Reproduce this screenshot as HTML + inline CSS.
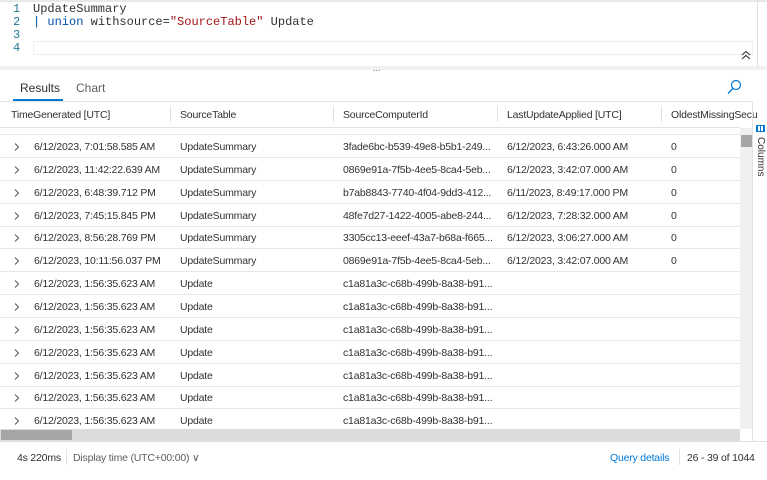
<!DOCTYPE html>
<html><head><style>
*{margin:0;padding:0;box-sizing:border-box}
body{width:767px;height:480px;overflow:hidden;background:#fff;font-family:"Liberation Sans",sans-serif;color:#323130;position:relative}
.a{position:absolute;white-space:nowrap}
.code{font-family:"Liberation Mono",monospace;font-size:12px;color:#323130}
.ln{color:#237893;font-family:"Liberation Mono",monospace;font-size:12px}
.t{font-size:10.5px;position:absolute;white-space:nowrap;letter-spacing:-0.2px}
.row{position:absolute;left:0;width:740px;height:23px;border-bottom:1px solid #e6e6e6}
</style></head><body>
<div class="a" style="left:0;top:0;width:767px;height:2px;background:#e8e8e8"></div>
<div class="a ln" style="left:13px;top:2px">1</div>
<div class="a ln" style="left:13px;top:15px">2</div>
<div class="a ln" style="left:13px;top:28px">3</div>
<div class="a ln" style="left:13px;top:41px">4</div>
<div class="a code" style="left:33px;top:2px">UpdateSummary</div>
<div class="a code" style="left:33px;top:15px"><span style="color:#0451a5">| union</span> withsource=<span style="color:#a31515">"SourceTable"</span> Update</div>
<div class="a" style="left:33px;top:41px;width:720px;height:14px;border:1px solid #eee"></div>
<div class="a" style="left:757px;top:0;width:1px;height:68px;background:#e0e0e0"></div>
<svg class="a" style="left:740px;top:50px" width="12" height="10"><path d="M2 5L6 1.5L10 5M2 9L6 5.5L10 9" fill="none" stroke="#333" stroke-width="1.1"/></svg>
<div class="a" style="left:0;top:66px;width:767px;height:4px;background:#f0f0f0"></div>
<div class="a" style="left:373px;top:63px;font-size:9px;color:#666">...</div>
<div class="a" style="left:20px;top:81px;font-size:12px;color:#323130">Results</div>
<div class="a" style="left:76px;top:81px;font-size:12px;color:#605e5c">Chart</div>
<div class="a" style="left:13px;top:99px;width:50px;height:2px;background:#0078d4"></div>
<svg class="a" style="left:726px;top:79px" width="16" height="16"><circle cx="10" cy="6" r="4.5" fill="none" stroke="#0078d4" stroke-width="1.2"/><line x1="7" y1="9.5" x2="2" y2="14.5" stroke="#0078d4" stroke-width="1.3"/></svg>
<div class="a" style="left:0;top:101px;width:752px;height:1px;background:#e1e1e1"></div>
<div class="a" style="left:0;top:127px;width:740px;height:1px;background:#e1e1e1"></div>
<div class="t" style="left:11px;top:109px">TimeGenerated [UTC]</div>
<div class="t" style="left:180px;top:109px">SourceTable</div>
<div class="t" style="left:343px;top:109px">SourceComputerId</div>
<div class="t" style="left:507px;top:109px">LastUpdateApplied [UTC]</div>
<div class="t" style="left:671px;top:109px">OldestMissingSecu</div>
<div class="a" style="left:170px;top:106px;width:1px;height:16px;background:#e1e1e1"></div>
<div class="a" style="left:333px;top:106px;width:1px;height:16px;background:#e1e1e1"></div>
<div class="a" style="left:497px;top:106px;width:1px;height:16px;background:#e1e1e1"></div>
<div class="a" style="left:661px;top:106px;width:1px;height:16px;background:#e1e1e1"></div>
<div class="a" style="left:0;top:134px;width:740px;height:1px;background:#e6e6e6"></div>
<div id="rows"></div>
<div class="a" style="left:740px;top:128px;width:13px;height:301px;background:#f0f0f0"></div>
<div class="a" style="left:741px;top:135px;width:11px;height:12px;background:#a6a6a6"></div>
<div class="a" style="left:0;top:429px;width:740px;height:12px;background:#dcdcdc"></div>
<div class="a" style="left:1px;top:430px;width:71px;height:10px;background:#a6a6a6"></div>
<div class="a" style="left:752px;top:101px;width:1px;height:340px;background:#e1e1e1"></div>
<div class="a" style="left:0;top:441px;width:767px;height:1px;background:#e1e1e1"></div>
<div class="a" style="left:756px;top:125px;width:9px;height:7px;border:1px solid #0078d4;background:repeating-linear-gradient(90deg,#0078d4 0 1px,transparent 1px 3px)"></div>
<div class="a" style="top:137px;font-size:10px;transform:rotate(90deg);transform-origin:0 0;left:766px">Columns</div>
<div class="t" style="left:17px;top:452px">4s 220ms</div>
<div class="a" style="left:66px;top:449px;width:1px;height:16px;background:#e1e1e1"></div>
<div class="t" style="left:73px;top:452px;color:#605e5c">Display time (UTC+00:00) &#x2228;</div>
<div class="t" style="left:610px;top:452px;color:#0078d4">Query details</div>
<div class="a" style="left:679px;top:449px;width:1px;height:16px;background:#e1e1e1"></div>
<div class="t" style="left:687px;top:452px">26 - 39 of 1044</div>
<script>
var d=[["6/12/2023, 7:01:58.585 AM","UpdateSummary","3fade6bc-b539-49e8-b5b1-249...","6/12/2023, 6:43:26.000 AM","0"],
["6/12/2023, 11:42:22.639 AM","UpdateSummary","0869e91a-7f5b-4ee5-8ca4-5eb...","6/12/2023, 3:42:07.000 AM","0"],
["6/12/2023, 6:48:39.712 PM","UpdateSummary","b7ab8843-7740-4f04-9dd3-412...","6/11/2023, 8:49:17.000 PM","0"],
["6/12/2023, 7:45:15.845 PM","UpdateSummary","48fe7d27-1422-4005-abe8-244...","6/12/2023, 7:28:32.000 AM","0"],
["6/12/2023, 8:56:28.769 PM","UpdateSummary","3305cc13-eeef-43a7-b68a-f665...","6/12/2023, 3:06:27.000 AM","0"],
["6/12/2023, 10:11:56.037 PM","UpdateSummary","0869e91a-7f5b-4ee5-8ca4-5eb...","6/12/2023, 3:42:07.000 AM","0"]];
for(var i=0;i<7;i++)d.push(["6/12/2023, 1:56:35.623 AM","Update","c1a81a3c-c68b-499b-8a38-b91...","",""]);
var h="",xs=[34,180,343,507,671];
d.forEach(function(r,i){var top=135+i*22.85;h+='<div class="row" style="top:'+top+'px"><svg class="a" style="left:14px;top:8px" width="6" height="8"><path d="M1 0.5L4.5 4L1 7.5" fill="none" stroke="#555" stroke-width="1"/></svg>';
r.forEach(function(c,j){h+='<div class="t" style="left:'+xs[j]+'px;top:6px">'+c+'</div>'});h+='</div>'});
document.getElementById('rows').innerHTML=h;
</script>
</body></html>
